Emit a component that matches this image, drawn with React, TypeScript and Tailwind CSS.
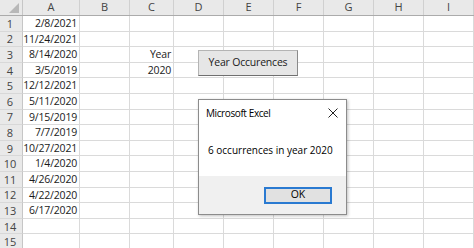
import React from "react";

const cols = [
  { l: "A", w: "w-[57px]" },
  { l: "B", w: "w-[50px]" },
  { l: "C", w: "w-[44px]" },
  { l: "D", w: "w-[50px]" },
  { l: "E", w: "w-[50px]" },
  { l: "F", w: "w-[50px]" },
  { l: "G", w: "w-[50px]" },
  { l: "H", w: "w-[50px]" },
  { l: "I", w: "w-[50px]" },
];

const dates = [
  "2/8/2021",
  "11/24/2021",
  "8/14/2020",
  "3/5/2019",
  "12/12/2021",
  "5/11/2020",
  "9/15/2019",
  "7/7/2019",
  "10/27/2021",
  "1/4/2020",
  "4/26/2020",
  "4/22/2020",
  "6/17/2020",
  "",
  "",
];

const cText: Record<number, string> = { 3: "Year", 4: "2020" };

export default function App() {
  return (
    <div
      className="relative w-[474px] h-[248px] overflow-hidden bg-white text-[10.5px] text-[#1a1a1a]"
      style={{ fontFamily: '"Open Sans", "Noto Sans", sans-serif' }}
    >
      <div className="flex flex-col">
        <div className="flex h-[16px] bg-[#e9e9e9] border-b border-[#ababab] box-border">
          <div className="w-[23px] h-full border-r border-[#c6c6c6] flex items-end justify-end pr-[3px] pb-[2px] box-border">
            <div className="w-0 h-0 border-l-[10px] border-l-transparent border-b-[10px] border-b-[#b8b8b8]" />
          </div>
          {cols.map((c) => (
            <div
              key={c.l}
              className={`${c.w} shrink-0 h-full border-r border-[#d0d0d0] box-border flex items-center justify-center text-[#444] text-[11px]`}
            >
              {c.l}
            </div>
          ))}
        </div>
        {dates.map((d, i) => {
          const r = i + 1;
          return (
            <div key={r} className="flex h-[15.6px] shrink-0">
              <div className="w-[23px] h-full shrink-0 bg-[#e9e9e9] border-r border-[#c6c6c6] border-b border-b-[#d8d8d8] box-border flex items-center justify-center pr-[2px] text-[#444] text-[11px] leading-none">
                {r}
              </div>
              {cols.map((c, ci) => (
                <div
                  key={c.l}
                  className={`${c.w} shrink-0 h-full border-r border-b border-[#dadada] box-border flex items-center justify-end pr-[2px] leading-none whitespace-nowrap tracking-[-0.2px]`}
                >
                  {ci === 0 ? d : ci === 2 ? cText[r] ?? "" : ""}
                </div>
              ))}
            </div>
          );
        })}
      </div>

      <button className="absolute left-[198px] top-[50px] w-[100px] h-[26px] bg-[#e6e6e6] border border-[#b4b4b4] border-r-[#8a8a8a] border-b-[#6f6f6f] box-border flex items-center justify-center text-[10.5px] tracking-[-0.2px] text-[#1a1a1a]">
        Year Occurences
      </button>

      <div className="absolute left-[198px] top-[99px] w-[149px] h-[116px] bg-white border border-[#8c8c8c] box-border shadow-[1px_1px_3px_rgba(0,0,0,0.25)] flex flex-col">
        <div className="h-[26px] flex items-center justify-between pl-[7px] pr-[8px] text-[10px] tracking-[-0.4px] text-black">
          <span>Microsoft Excel</span>
          <svg width="10" height="10" viewBox="0 0 10 10">
            <path d="M0.5 0.5 L9.5 9.5 M9.5 0.5 L0.5 9.5" stroke="#222" strokeWidth="1" />
          </svg>
        </div>
        <div className="flex-1 flex items-center pl-[9px] pb-[2px] text-[10px] text-black">
          6 occurrences in year 2020
        </div>
        <div className="h-[38px] bg-[#f0f0f0] flex items-center justify-end pr-[14px]">
          <div className="w-[68px] h-[17px] bg-[#e1e1e1] border-2 border-[#2a7ad1] box-border flex items-center justify-center text-[10.5px] text-black">
            OK
          </div>
        </div>
      </div>
    </div>
  );
}
